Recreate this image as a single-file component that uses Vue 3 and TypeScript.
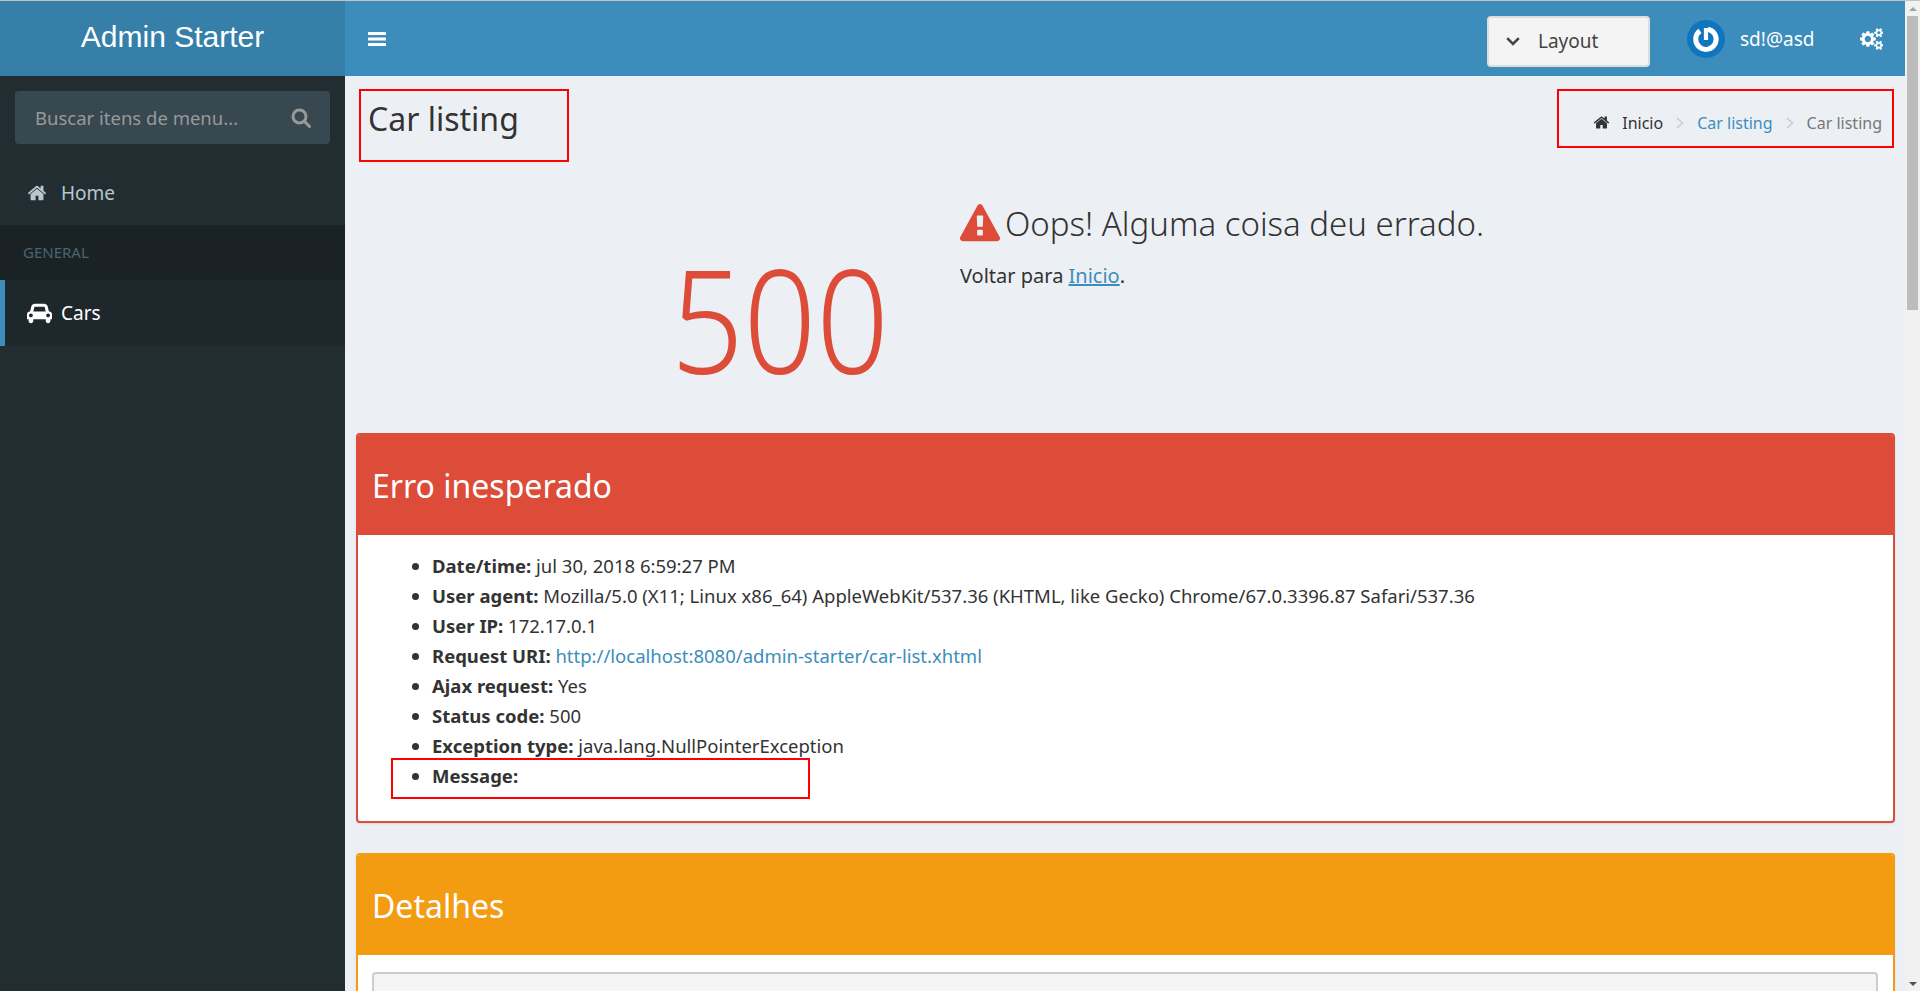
<script setup lang="ts">
interface Detail {
  label: string
  value: string
  href?: boolean
}

const details: Detail[] = [
  { label: 'Date/time:', value: 'jul 30, 2018 6:59:27 PM' },
  { label: 'User agent:', value: 'Mozilla/5.0 (X11; Linux x86_64) AppleWebKit/537.36 (KHTML, like Gecko) Chrome/67.0.3396.87 Safari/537.36' },
  { label: 'User IP:', value: '172.17.0.1' },
  { label: 'Request URI:', value: 'http://localhost:8080/admin-starter/car-list.xhtml', href: true },
  { label: 'Ajax request:', value: 'Yes' },
  { label: 'Status code:', value: '500' },
  { label: 'Exception type:', value: 'java.lang.NullPointerException' },
]

const homePath = 'M1472 992v480q0 26-19 45t-45 19h-384v-384h-256v384h-384q-26 0-45-19t-19-45v-480q0-1 .5-3t.5-3l575-474 575 474q1 2 1 6zm223-69l-62 74q-8 9-21 11h-3q-13 0-21-7l-692-577-692 577q-12 8-24 7-13-2-21-11l-62-74q-8-10-7-23.5t11-21.5l719-599q32-26 76-26t76 26l244 204v-195q0-14 9-23t23-9h192q14 0 23 9t9 23v408l219 182q10 8 11 21.5t-7 23.5z'
</script>

<template>
  <div class="page">
    <div class="main">
      <header class="topbar">
        <div class="logo">Admin Starter</div>
        <div class="nav">
          <svg class="bars" viewBox="0 0 18 14" fill="#fff">
            <rect y="0" width="18" height="3" rx="0.5" />
            <rect y="5.5" width="18" height="3" rx="0.5" />
            <rect y="11" width="18" height="3" rx="0.5" />
          </svg>
          <div class="nav-right">
            <button class="layout-btn">
              <svg class="chevron" viewBox="0 0 14 9" fill="none" stroke="#444" stroke-width="2.6">
                <path d="M1.2 1.2 7 7l5.8-5.8" />
              </svg>
              Layout
            </button>
            <svg class="avatar" viewBox="0 0 38 38">
              <defs>
                <filter id="soft"><feGaussianBlur stdDeviation="0.6" /></filter>
              </defs>
              <circle cx="19" cy="19" r="19" fill="#0f75bc" />
              <g fill="none" stroke="#fff" filter="url(#soft)">
                <path d="M21 9.2a10.2 10.2 0 1 1-8 1.7" stroke-width="5" />
                <path d="M19 8v12" stroke-width="4.2" />
              </g>
            </svg>
            <span class="user">sd!@asd</span>
            <svg class="cogs" viewBox="0 0 1920 1792" fill="#fff">
              <path d="M960 896q0-106-75-181t-181-75-181 75-75 181 75 181 181 75 181-75 75-181zm768 512q0-52-38-90t-90-38-90 38-38 90q0 53 37.5 90.5t90.5 37.5 90.5-37.5 37.5-90.5zm0-1024q0-52-38-90t-90-38-90 38-38 90q0 53 37.5 90.5t90.5 37.5 90.5-37.5 37.5-90.5zm-384 421v185q0 10-7 19.5t-16 10.5l-155 24q-11 35-32 76 34 48 90 115 7 11 7 20 0 12-7 19-23 30-82.5 89.5t-78.5 59.5q-11 0-21-7l-115-90q-37 19-77 31-11 108-23 155-7 24-30 24h-186q-11 0-20-7.5t-10-17.5l-23-153q-34-10-75-31l-118 89q-7 7-20 7-11 0-21-8-144-133-144-160 0-9 7-19 10-14 41-53t47-61q-23-44-35-82l-152-24q-10-1-17-9.5t-7-19.5v-185q0-10 7-19.5t16-10.5l155-24q11-35 32-76-34-48-90-115-7-11-7-20 0-12 7-20 22-30 82-89t79-59q11 0 21 7l115 90q34-18 77-32 11-108 23-154 7-24 30-24h186q11 0 20 7.5t10 17.5l23 153q34 10 75 31l118-89q8-7 20-7 11 0 21 8 144 133 144 160 0 8-7 19-12 16-42 54t-45 60q23 48 34 82l152 23q10 2 17 10.5t7 19.5zm640 533v140q0 16-149 31-12 27-30 52 51 113 51 138 0 4-4 7-122 71-124 71-8 0-46-47t-52-68q-20 2-30 2t-30-2q-14 21-52 68t-46 47q-2 0-124-71-4-3-4-7 0-25 51-138-18-25-30-52-149-15-149-31v-140q0-16 149-31 13-29 30-52-51-113-51-138 0-4 4-7 4-2 35-20t59-34 30-16q8 0 46 46.5t52 67.5q20-2 30-2t30 2q51-71 92-112l6-2q4 0 124 70 4 3 4 7 0 25-51 138 17 23 30 52 149 15 149 31zm0-1024v140q0 16-149 31-12 27-30 52 51 113 51 138 0 4-4 7-122 71-124 71-8 0-46-47t-52-68q-20 2-30 2t-30-2q-14 21-52 68t-46 47q-2 0-124-71-4-3-4-7 0-25 51-138-18-25-30-52-149-15-149-31v-140q0-16 149-31 13-29 30-52-51-113-51-138 0-4 4-7 4-2 35-20t59-34 30-16q8 0 46 46.5t52 67.5q20-2 30-2t30 2q51-71 92-112l6-2q4 0 124 70 4 3 4 7 0 25-51 138 17 23 30 52 149 15 149 31z" />
            </svg>
          </div>
        </div>
      </header>

      <div class="body">
        <aside class="sidebar">
          <div class="search">
            <span>Buscar itens de menu...</span>
            <svg class="search-icon" viewBox="0 0 20 20" fill="none" stroke="#999" stroke-width="3">
              <circle cx="8.5" cy="8.5" r="6.5" />
              <path d="m13.5 13.5 5 5" stroke-linecap="round" />
            </svg>
          </div>
          <div class="menu-item">
            <svg class="home-icon" viewBox="0 0 1792 1792" fill="#b8c7ce"><path :d="homePath" /></svg>
            Home
          </div>
          <div class="menu-header">GENERAL</div>
          <div class="menu-item active">
            <svg class="car-icon" viewBox="0 0 2048 1792" fill="#fff">
              <path d="M480 1088q0-66-47-113t-113-47-113 47-47 113 47 113 113 47 113-47 47-113zm36-320h1016l-89-357q-2-8-14-17.5t-21-9.5h-768q-9 0-21 9.5t-14 17.5zm1372 320q0-66-47-113t-113-47-113 47-47 113 47 113 113 47 113-47 47-113zm160-96v384q0 14-9 23t-23 9h-96v128q0 80-56 136t-136 56-136-56-56-136v-128h-1024v128q0 80-56 136t-136 56-136-56-56-136v-128h-96q-14 0-23-9t-9-23v-384q0-93 65.5-158.5t158.5-65.5h28l105-419q23-94 104-157.5t179-63.5h768q98 0 179 63.5t104 157.5l105 419h28q93 0 158.5 65.5t65.5 158.5z" />
            </svg>
            Cars
          </div>
        </aside>

        <main class="content">
          <div class="content-head">
            <h1 class="title">Car listing</h1>
            <ol class="crumbs">
              <li class="crumb-home">
                <svg class="crumb-icon" viewBox="0 0 1792 1792" fill="#333"><path :d="homePath" /></svg>
                Inicio
              </li>
              <li class="sep"><svg viewBox="0 0 8 12" fill="none" stroke="#ccc" stroke-width="1.6"><path d="m1 1 5.5 5L1 11" /></svg></li>
              <li class="crumb-link">Car listing</li>
              <li class="sep"><svg viewBox="0 0 8 12" fill="none" stroke="#ccc" stroke-width="1.6"><path d="m1 1 5.5 5L1 11" /></svg></li>
              <li class="crumb-last">Car listing</li>
            </ol>
          </div>

          <section class="error-row">
            <div class="code"><span>500</span></div>
            <div class="error-text">
              <h2>
                <svg class="warn" viewBox="0 0 1792 1792" fill="#dd4b39">
                  <path d="M1024 1375v-190q0-14-9.5-23.5t-22.5-9.5h-192q-13 0-22.5 9.5t-9.5 23.5v190q0 14 9.5 23.5t22.5 9.5h192q13 0 22.5-9.5t9.5-23.5zm-2-374l18-459q0-12-10-19-13-11-24-11h-220q-11 0-24 11-10 7-10 21l17 457q0 10 10 16.5t24 6.5h185q14 0 23.5-6.5t10.5-16.5zm-14-934l768 1408q35 63-2 126-17 29-46.5 46t-63.5 17h-1536q-34 0-63.5-17t-46.5-46q-37-63-2-126l768-1408q17-31 47-49t65-18 65 18 47 49z" />
                </svg>
                Oops! Alguma coisa deu errado.
              </h2>
              <p>Voltar para <a href="#">Inicio</a>.</p>
            </div>
          </section>

          <section class="card danger">
            <h3 class="card-title">Erro inesperado</h3>
            <div class="card-body">
              <ul class="facts">
                <li v-for="d in details" :key="d.label">
                  <b>{{ d.label }}</b>
                  {{ ' ' }}
                  <a v-if="d.href" href="#">{{ d.value }}</a>
                  <template v-else>{{ d.value }}</template>
                </li>
                <li class="message"><b>Message:</b><span class="mark"></span></li>
              </ul>
            </div>
          </section>

          <section class="card warning">
            <h3 class="card-title">Detalhes</h3>
            <div class="card-body">
              <div class="trace"></div>
            </div>
          </section>
        </main>
      </div>
    </div>

    <div class="scrollbar">
      <span class="arrow up"></span>
      <span class="thumb"></span>
      <span class="arrow down"></span>
    </div>
  </div>
</template>

<style>
html,
body {
  margin: 0;
  overflow: hidden;
}
</style>

<style scoped>
.page {
  display: flex;
  height: 991px;
  box-sizing: border-box;
  border-top: 1px solid #c4c4c4;
  overflow: hidden;
  font-family: 'Noto Sans', 'Open Sans', sans-serif;
  font-size: 18.5px;
  color: #333;
  background: #ecf0f5;
}

.main {
  flex: 1;
  min-width: 0;
  display: flex;
  flex-direction: column;
}

.topbar {
  display: flex;
  height: 75px;
  flex: none;
}

.logo {
  width: 345px;
  background: #367fa9;
  color: #fff;
  font-family: 'Liberation Sans', Arial, sans-serif;
  font-size: 30px;
  text-align: center;
  line-height: 72px;
}

.nav {
  flex: 1;
  background: #3c8dbc;
  display: flex;
  align-items: center;
  justify-content: space-between;
  padding: 0 22px 0 23px;
}

.bars {
  width: 18px;
  height: 14px;
}

.nav-right {
  display: flex;
  align-items: center;
}

.layout-btn {
  width: 163px;
  height: 51px;
  box-sizing: border-box;
  margin: 5px 37px 0 0;
  padding: 0 0 0 17px;
  display: flex;
  align-items: center;
  gap: 18px;
  background: #f4f4f4;
  border: 2px solid #ddd;
  border-radius: 4px;
  font-family: inherit;
  font-size: 19px;
  color: #444;
}

.chevron {
  width: 14px;
  height: 9px;
}

.avatar {
  width: 38px;
  height: 38px;
  margin-right: 15px;
}

.user {
  color: #fff;
  width: 119px;
  font-size: 19px;
}

.cogs {
  width: 24px;
  height: 22px;
}

.body {
  flex: 1;
  display: flex;
  min-height: 0;
}

.sidebar {
  width: 345px;
  flex: none;
  background: #222d32;
  color: #b8c7ce;
}

.search {
  margin: 15px 15px 0;
  height: 53px;
  box-sizing: border-box;
  padding: 0 19px 0 20px;
  display: flex;
  align-items: center;
  justify-content: space-between;
  background: #374850;
  border-radius: 4px;
  color: #999;
}

.search-icon {
  width: 20px;
  height: 20px;
}

.menu-item {
  display: flex;
  align-items: center;
  height: 65px;
  padding-left: 27px;
  gap: 16px;
  margin-top: 16px;
  font-size: 19px;
}

.menu-item.active {
  margin-top: 0;
  height: 66px;
  padding-left: 22px;
  border-left: 5px solid #3c8dbc;
  background: #1e282c;
  color: #fff;
}

.home-icon {
  width: 20px;
  height: 20px;
  margin-right: -2px;
}

.car-icon {
  width: 25px;
  height: 22px;
  margin-right: -7px;
}

.menu-header {
  height: 55px;
  line-height: 55px;
  padding-left: 23px;
  background: #1a2226;
  color: #4b646f;
  font-size: 15px;
}

.content {
  flex: 1;
  min-width: 0;
  padding: 13px 10px 0 11px;
}

.content-head {
  display: flex;
  justify-content: space-between;
}

.title {
  width: 210px;
  height: 73px;
  box-sizing: border-box;
  margin: 0 0 0 3px;
  padding: 6px 0 0 7px;
  border: 2px solid #f00;
  font-size: 32px;
  font-weight: 400;
  line-height: 44px;
}

.crumbs {
  width: 337px;
  height: 59px;
  box-sizing: border-box;
  margin: 0 1px 0 0;
  padding: 8px 10px 0 0;
  list-style: none;
  border: 2px solid #f00;
  display: flex;
  justify-content: flex-end;
  align-items: center;
  gap: 13px;
  font-size: 16px;
}

.crumb-icon {
  width: 17px;
  height: 17px;
  margin-right: 8px;
  vertical-align: -2px;
}

.sep {
  display: flex;
}

.sep svg {
  width: 8px;
  height: 12px;
}

.crumb-link {
  color: #3c8dbc;
}

.crumb-last {
  color: #777;
}

.error-row {
  height: 271px;
  box-sizing: border-box;
  display: flex;
  padding-top: 39px;
}

.code {
  width: 533px;
  height: 170px;
  text-align: right;
  font-size: 143px;
  font-weight: 300;
  line-height: 170px;
  color: #dd4b39;
  padding-top: 33px;
  flex: none;
}

.code span {
  display: inline-block;
  transform: scaleX(0.89);
  transform-origin: right center;
}

.error-text {
  margin-left: 71px;
}

.error-text h2 {
  margin: 0;
  padding-top: 1px;
  display: flex;
  align-items: center;
  gap: 5px;
  font-size: 33px;
  font-weight: 300;
  line-height: 44px;
}

.warn {
  width: 40px;
  height: 40px;
}

.error-text p {
  margin: 16px 0 0;
  font-size: 20px;
}

.error-text a {
  color: #3c8dbc;
}

.card {
  border-radius: 4px;
  overflow: hidden;
  background: #fff;
  border: 2px solid;
  box-shadow: 0 1px 2px rgba(0, 0, 0, 0.1);
}

.danger {
  border-color: #dd4b39;
}

.warning {
  margin-top: 30px;
  border-color: #f39c12;
}

.card-title {
  margin: 0;
  height: 100px;
  padding: 0 14px;
  font-size: 32px;
  font-weight: 400;
  line-height: 102px;
  color: #fff;
}

.danger .card-title {
  background: #dd4b39;
}

.warning .card-title {
  background: #f39c12;
}

.facts {
  margin: 0;
  padding: 16px 0 30px 74px;
  line-height: 30px;
  color: #333;
}

.facts a {
  color: #3c8dbc;
  text-decoration: none;
}

.message {
  position: relative;
}

.mark {
  position: absolute;
  left: -41px;
  top: -3px;
  width: 419px;
  height: 41px;
  box-sizing: border-box;
  border: 2px solid #f00;
}

.warning .card-body {
  padding: 17px 15px 0 14px;
}

.trace {
  height: 200px;
  background: #f5f5f5;
  border: 2px solid #ccc;
  border-radius: 4px;
}

.scrollbar {
  width: 15px;
  flex: none;
  background: #f1f1f1;
  display: flex;
  flex-direction: column;
  align-items: center;
  position: relative;
}

.thumb {
  position: absolute;
  top: 15px;
  left: 2px;
  width: 11px;
  height: 294px;
  background: #bcbcbc;
}

.arrow {
  position: absolute;
  width: 0;
  height: 0;
  border-left: 4px solid transparent;
  border-right: 4px solid transparent;
}

.up {
  top: 6px;
  border-bottom: 4px solid #a3a3a3;
}

.down {
  bottom: 5px;
  border-top: 4px solid #505050;
}
</style>
